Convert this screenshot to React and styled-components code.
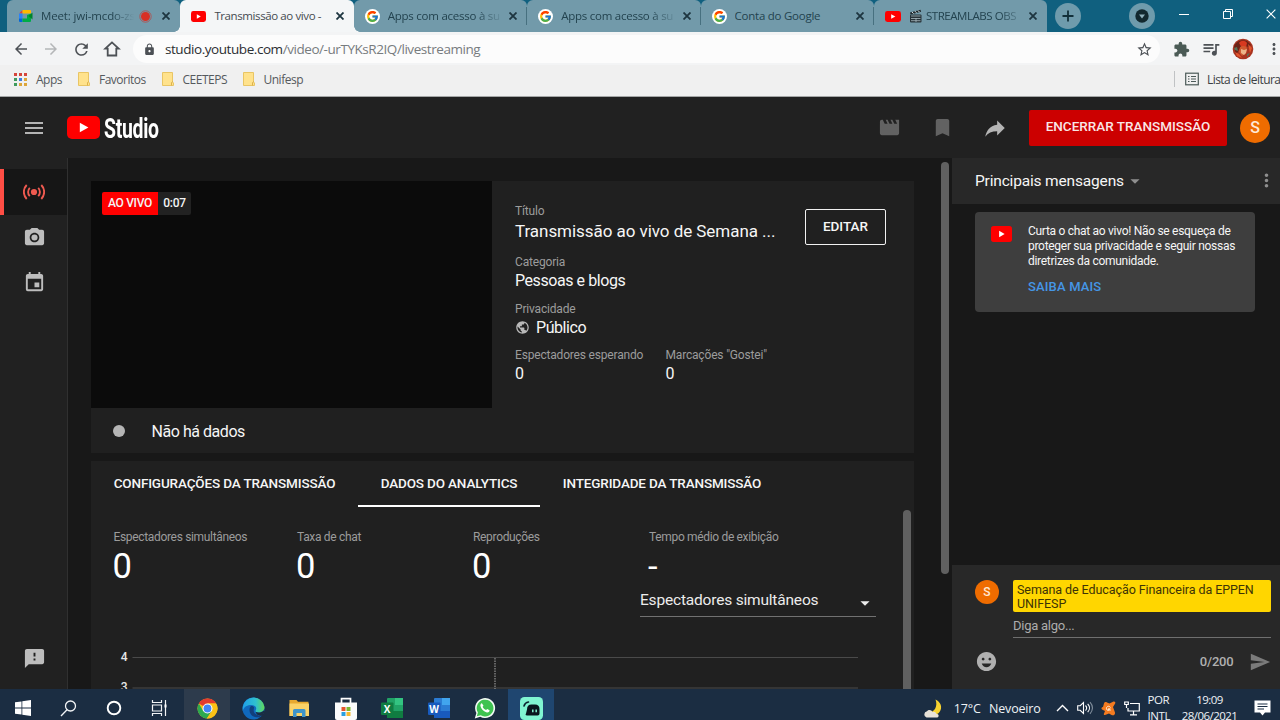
import React from 'react';
import styled, { createGlobalStyle, css } from 'styled-components';
import {
  MdArrowBack,
  MdArrowForward,
  MdRefresh,
  MdLock,
  MdStarBorder,
  MdExtension,
  MdQueueMusic,
  MdMoreVert,
  MdMenu,
  MdMovie,
  MdBookmark,
  MdReply,
  MdCameraAlt,
  MdEvent,
  MdFeedback,
  MdPublic,
  MdArrowDropDown,
  MdSend,
  MdEmojiEmotions,
} from 'react-icons/md';
import { FcGoogle } from 'react-icons/fc';

const GlobalStyle = createGlobalStyle`
  * {
    box-sizing: border-box;
  }

  body {
    margin: 0;
    background: #181818;
    overflow: hidden;
  }

  svg {
    display: block;
    flex: none;
  }
`;

const roboto = css`
  font-family: Roboto, 'Liberation Sans', sans-serif;
`;
const segoe = css`
  font-family: 'Open Sans', 'Noto Sans', sans-serif;
`;

const Screen = styled.div`
  width: 1280px;
  height: 720px;
  display: flex;
  flex-direction: column;
  overflow: hidden;
  white-space: nowrap;
  ${roboto};
`;

/* Browser chrome */
const TabStrip = styled.div`
  height: 32px;
  flex: none;
  display: flex;
  padding-left: 7px;
  background: #10607f;
  ${segoe};
`;
const Tab = styled.div`
  position: relative;
  width: 173.4px;
  height: 32px;
  flex: none;
  display: flex;
  align-items: center;
  padding: 0 10px 0 11px;
  border-radius: 6px 6px 0 0;
  background: ${({ $active }) => ($active ? '#f4f6f7' : '#729aaa')};
  color: ${({ $active }) => ($active ? '#454b50' : '#23434f')};
  z-index: ${({ $active }) => ($active ? 1 : 0)};

  ${({ $active }) =>
    $active &&
    css`
      &:before,
      &:after {
        content: '';
        position: absolute;
        bottom: 0;
        width: 6px;
        height: 6px;
      }
      &:before {
        left: -6px;
        background: radial-gradient(circle at 0 0, #729aaa 5.5px, #f4f6f7 6px);
      }
      &:after {
        right: -6px;
        background: radial-gradient(circle at 100% 0, #729aaa 5.5px, #f4f6f7 6px);
      }
    `}
  ${({ $sep }) =>
    $sep &&
    css`
      &:after {
        content: '';
        position: absolute;
        right: 0;
        top: 7px;
        width: 1px;
        height: 18px;
        background: #47707f;
      }
    `}
`;
const TabTitle = styled.div`
  flex: 1;
  min-width: 0;
  overflow: hidden;
  margin-left: ${({ $gap }) => $gap}px;
  margin-right: 5px;
  font-size: 11.5px;
  letter-spacing: ${({ $ls }) => $ls || -0.25}px;
  line-height: 18px;
  mask-image: ${({ $fade }) => ($fade ? 'linear-gradient(90deg, #000 76%, transparent 100%)' : 'none')};
`;
const Recording = styled.div`
  margin-right: 10px;
`;
const TitleEmoji = styled.div`
  margin-left: 8px;
`;
const Round = styled.div`
  width: ${({ $size }) => $size}px;
  height: ${({ $size }) => $size}px;
  flex: none;
  display: flex;
  align-items: center;
  justify-content: center;
  border-radius: 50%;
  background: ${({ $bg }) => $bg};
  color: #ffe9d6;
  font-size: ${({ $font }) => $font || 12}px;
  font-weight: 500;
`;
const StripActions = styled.div`
  flex: 1;
  display: flex;
  align-items: center;
`;
const NewTab = styled(Round)`
  margin-left: 8px;
`;
const TabSearch = styled(Round)`
  margin-left: 48px;
`;
const WindowButtons = styled.div`
  display: flex;
  align-items: center;
  gap: 33.5px;
  margin: -5px 0 0 24px;
`;

const Toolbar = styled.div`
  height: 33px;
  flex: none;
  display: flex;
  align-items: center;
  padding: 1px 0 0 12px;
  background: #f3f4f5;
  color: #4d5156;
`;
const NavButtons = styled.div`
  width: 121px;
  flex: none;
  display: flex;
  gap: 12px;
`;
const Omnibox = styled.div`
  width: 1027px;
  height: 28px;
  flex: none;
  display: flex;
  align-items: center;
  padding: 0 7px 0 10px;
  border-radius: 14px;
  background: #fcfcfc;
`;
const Url = styled.div`
  flex: 1;
  margin-left: 9px;
  font-size: 13.5px;
  letter-spacing: -0.44px;
  color: #777b7e;
  ${segoe};

  b {
    font-weight: 400;
    color: #2b2e31;
  }
`;
const Extensions = styled.div`
  display: flex;
  flex: none;
  align-items: center;
  gap: 11px;
  margin-left: 13px;
`;
const Bookmarks = styled.div`
  height: 32px;
  flex: none;
  display: flex;
  align-items: center;
  padding: 0 0 3px 14px;
  background: #f0f0f0;
  border-bottom: 1px solid #a4a6a6;
  font-size: 12px;
  letter-spacing: -0.5px;
  color: #55595d;
  ${segoe};
`;
const Bookmark = styled.div`
  display: flex;
  align-items: center;
  gap: 9px;
  width: ${({ $w }) => $w}px;
`;
const ReadingList = styled.div`
  display: flex;
  align-items: center;
  height: 16px;
  margin-left: auto;
  padding-left: 10px;
  border-left: 1px solid #c0c2c4;
  gap: 8px;
  width: 106px;
  color: #3c4043;
  letter-spacing: -0.55px;
`;

/* Studio shell */
const Header = styled.header`
  height: 61px;
  flex: none;
  display: flex;
  align-items: center;
  padding: 0 10px 0 22px;
  background: #212121;
  color: #b4b4b4;
`;
const Logo = styled.div`
  display: flex;
  align-items: center;
  gap: 4px;
  margin-left: 21px;
`;
const LogoText = styled.div`
  font-size: 27px;
  font-weight: 700;
  letter-spacing: -0.4px;
  line-height: 28px;
  padding-top: 2px;
  color: #fff;
  transform: scaleX(0.72);
  transform-origin: 0 50%;
`;
const HeaderActions = styled.div`
  display: flex;
  align-items: center;
  gap: 30px;
  margin-left: auto;
`;
const ShareIcon = styled(MdReply)`
  margin: 0 -9px 0 -2px;
  transform: scaleX(-1);
`;
const EndButton = styled.div`
  width: 198px;
  height: 36px;
  margin-right: -17px;
  padding-bottom: 4px;
  display: flex;
  align-items: center;
  justify-content: center;
  border-radius: 2px;
  background: #cc0000;
  color: #f9e6e6;
  font-size: 13.5px;
  font-weight: 500;
`;
const Body = styled.div`
  flex: 1;
  min-height: 0;
  display: flex;
`;
const Sidebar = styled.nav`
  width: 68px;
  flex: none;
  display: flex;
  flex-direction: column;
  padding-top: 11px;
  background: #212121;
  border-right: 1px solid #303030;
  color: #bdbdbd;
`;
const NavItem = styled.div`
  height: 45.5px;
  display: flex;
  align-items: center;
  justify-content: center;
  padding-left: 1px;
  margin-top: ${({ $last }) => ($last ? 'auto' : '0')};
  margin-bottom: ${({ $last }) => ($last ? '8px' : '0')};
  ${({ $active }) =>
    $active &&
    css`
      padding: 0 3px 0 0;
      border-left: 4px solid #ff4e45;
      background: #161616;
    `}
`;
const Main = styled.main`
  width: 884px;
  flex: none;
  display: flex;
  background: #181818;
`;
const Cards = styled.div`
  width: 846px;
  display: flex;
  flex-direction: column;
  gap: 8px;
  padding: 23px 0 0 23px;
`;
const Thumb = styled.div`
  width: 8px;
  height: ${({ $h }) => $h};
  border-radius: 4px;
  background: #606060;
`;
const MainThumb = styled(Thumb)`
  margin: 4px 0 0 27px;
`;

/* Stream card */
const StreamCard = styled.section`
  height: 272px;
  flex: none;
  background: #202020;
`;
const StreamTop = styled.div`
  height: 227px;
  display: flex;
`;
const Preview = styled.div`
  width: 401px;
  flex: none;
  display: flex;
  align-items: flex-start;
  padding: 11px;
  background: #0b0b0b;
`;
const Badge = styled.div`
  width: ${({ $w }) => $w}px;
  height: 23px;
  line-height: 23px;
  text-align: center;
  background: ${({ $live }) => ($live ? '#ff0000' : '#222')};
  color: #f4f4f4;
  font-size: 12px;
  font-weight: 500;
  letter-spacing: -0.3px;
  border-radius: ${({ $live }) => ($live ? '2px 0 0 2px' : '0 2px 2px 0')};
`;
const Info = styled.div`
  display: grid;
  grid-template-columns: 150.5px 1fr;
  grid-template-rows: 51px 46.5px 46.5px 40px;
  width: 290px;
  padding: 22px 0 0 23px;
`;
const Field = styled.div`
  grid-column: ${({ $wide }) => ($wide ? '1 / 3' : 'auto')};
`;
const Label = styled.div`
  font-size: 12px;
  line-height: 16px;
  letter-spacing: ${({ $ls }) => $ls || -0.18}px;
  color: #9c9c9c;
`;
const Value = styled.div`
  display: flex;
  align-items: center;
  gap: 6px;
  font-size: ${({ $size }) => $size || 16}px;
  line-height: ${({ $lh }) => $lh || 21}px;
  letter-spacing: ${({ $ls }) => $ls || -0.43}px;
  color: #f6f6f6;
`;
const EditButton = styled.div`
  width: 81px;
  height: 36px;
  margin: 28px 0 0 23px;
  padding-bottom: 2px;
  display: flex;
  align-items: center;
  justify-content: center;
  border: 1px solid #f1f1f1;
  border-radius: 2px;
  color: #f6f6f6;
  font-size: 13.5px;
  font-weight: 500;
`;
const Status = styled.div`
  height: 45px;
  display: flex;
  align-items: center;
  gap: 26.5px;
  padding: 1px 0 0 22px;
  font-size: 16px;
  letter-spacing: -0.45px;
  color: #f6f6f6;
`;

/* Analytics card */
const AnalyticsCard = styled.section`
  flex: 1;
  min-height: 0;
  overflow: hidden;
  background: #202020;
`;
const StatTabs = styled.div`
  display: flex;
  height: 46px;
`;
const StatTab = styled.div`
  width: ${({ $w }) => $w}px;
  text-align: center;
  line-height: 45px;
  border-bottom: 2px solid ${({ $active }) => ($active ? '#fff' : 'transparent')};
  color: #f6f6f6;
  font-size: 13.5px;
  font-weight: 500;
  letter-spacing: -0.15px;
`;
const AnalyticsBody = styled.div`
  display: flex;
  height: 182px;
`;
const AnalyticsContent = styled.div`
  width: 812px;
  display: flex;
  flex-direction: column;
  padding: 22px 0 0 22.5px;
`;
const AnalyticsThumb = styled(Thumb)`
  margin-top: 3px;
  border-radius: 4px 4px 0 0;
`;
const Metrics = styled.div`
  display: grid;
  grid-template-columns: 183.5px 176px 176px 1fr;
`;
const Metric = styled.div`
  height: 56px;
`;
const MetricValue = styled.div`
  margin-left: -1px;
  font-size: 34.5px;
  line-height: 42px;
  color: #fff;
`;
const Select = styled.div`
  width: 236px;
  height: 32px;
  margin-left: 526.5px;
  padding-bottom: 1px;
  display: flex;
  align-items: center;
  justify-content: space-between;
  border-bottom: 1px solid #717171;
  font-size: 15.5px;
  letter-spacing: -0.19px;
  color: #ececec;

  svg {
    margin-top: 5px;
  }
`;
const ChartArea = styled.div`
  margin-top: 30px;
`;

/* Chat */
const Chat = styled.aside`
  flex: 1;
  min-width: 0;
  display: flex;
  flex-direction: column;
  background: #181818;
`;
const ChatHeader = styled.div`
  height: 46px;
  display: flex;
  align-items: center;
  padding: 0 3px 1px 23px;
  background: #282828;
  color: #f6f6f6;
  font-size: 15.5px;
  letter-spacing: -0.17px;

  svg {
    margin-top: 1px;
    color: #8f8f8f;
  }

  svg:last-child {
    margin: 0 0 0 auto;
  }
`;
const Notice = styled.div`
  width: 280px;
  height: 100px;
  margin: 8px 0 0 23px;
  padding: 12px 0 0 16px;
  display: flex;
  gap: 16px;
  border-radius: 4px;
  background: #3e3e3e;
  color: #f6f6f6;
  font-size: 12px;
  line-height: 15px;
  letter-spacing: -0.29px;
`;
const NoticeIcon = styled.div`
  padding-top: 2px;
`;
const NoticeLink = styled.div`
  margin-top: 9px;
  font-size: 13px;
  font-weight: 500;
  line-height: 18px;
  letter-spacing: 0.15px;
  color: #4596e6;
`;
const Composer = styled.div`
  height: 124px;
  margin-top: auto;
  padding: 15px 9.5px 0 23px;
  background: #282828;
`;
const ComposerTop = styled.div`
  display: flex;
  gap: 14px;
`;
const ComposerInput = styled.div`
  flex: 1;
  height: 58px;
  border-bottom: 1px solid #6f6f6f;
  font-size: 13px;
  letter-spacing: -0.25px;
  color: #adadad;
`;
const Author = styled.div`
  height: 32px;
  margin-bottom: 6px;
  padding: 3px 4px 0;
  border-radius: 2px;
  background: #ffd600;
  color: #3d3306;
  font-size: 12.5px;
  line-height: 14px;
  letter-spacing: -0.08px;
`;
const ComposerBottom = styled.div`
  display: flex;
  align-items: center;
  height: 47px;
  color: #b0b0b0;
`;
const Counter = styled.div`
  margin: 0 15px 0 auto;
  font-size: 13px;
  font-weight: 500;
  letter-spacing: -0.2px;
`;

/* Windows taskbar */
const Taskbar = styled.footer`
  height: 31px;
  flex: none;
  display: flex;
  background: #1b2d42;
  color: #eef2f6;
  font-size: 12.5px;
  ${segoe};
`;
const TaskButton = styled.div`
  width: ${({ $app }) => ($app ? 46.3 : 45.5)}px;
  height: 31px;
  flex: none;
  display: flex;
  align-items: center;
  justify-content: center;
  padding-top: 7px;
  background: ${({ $bg }) => $bg || 'transparent'};
`;
const Apps = styled.div`
  display: flex;
  margin-left: 2px;
`;
const Tray = styled.div`
  display: flex;
  align-items: center;
  height: 38px;
  margin-left: auto;
  padding-right: 9.5px;
`;
const Weather = styled.div`
  display: flex;
  align-items: center;
  gap: 8.5px;
  margin-right: 15px;
  letter-spacing: -0.2px;
`;
const TrayIcons = styled.div`
  display: flex;
  align-items: center;
  gap: 8px;
  margin-right: 8px;
`;
const TrayText = styled.div`
  width: ${({ $w }) => $w}px;
  display: flex;
  flex-direction: column;
  align-items: ${({ $center }) => ($center ? 'center' : 'flex-start')};
  margin: -1px ${({ $center }) => ($center ? 6 : 0)}px 0 0;
  font-size: 11.5px;
  line-height: 16px;
  letter-spacing: ${({ $center }) => ($center ? -0.55 : -0.4)}px;
`;

const PlayLogo = ({ width = 33, height = 23, r = 5 }) => (
  <svg width={width} height={height} viewBox="0 0 33 23" preserveAspectRatio="none">
    <rect width="33" height="23" rx={r} fill="#ff0000" />
    <path d="M12.8 6.8 21.4 11.5 12.8 16.2z" fill="#fff" />
  </svg>
);

const Cross = ({ size = 8, color = '#1d3540', weight = 1.8 }) => (
  <svg width={size} height={size} viewBox="0 0 8 8">
    <path d="M.5.5 7.5 7.5M7.5.5.5 7.5" stroke={color} strokeWidth={weight} />
  </svg>
);

const MeetLogo = () => (
  <svg width="16" height="14" viewBox="0 0 16 14">
    <path d="M1 4.500 4.500 1v3.500z" fill="#e94235" />
    <path d="M4.500 1H12a1 1 0 0 1 1 1v2.500H4.500z" fill="#ffba00" />
    <path d="M1 4.500h3.500v5H1z" fill="#2684fc" />
    <path d="M1 9.500h3.500V13H2a1 1 0 0 1-1-1z" fill="#0066da" />
    <path d="M4.500 9.500H9V6l4-1.500V12a1 1 0 0 1-1 1H4.500z" fill="#00ac47" />
    <path d="M10.500 7 14.500 3.500v7z" fill="#00832d" />
  </svg>
);

const Clapper = () => (
  <svg width="13" height="14" viewBox="0 0 13 14">
    <path d="M1 3.500 11.500.8l.6 2L1.500 5.500z" fill="#1e282c" />
    <path d="m3 3 1.500 1.600M6 2.200l1.500 1.600M9 1.500l1.500 1.600" stroke="#dfe6e8" />
    <rect x="1" y="5.500" width="11.500" height="8" rx="1" fill="#263238" />
    <path d="M2 7h9.500M2 9.500h9.500M2 11.700h9.500M7 9v4" stroke="#a9bac0" strokeWidth=".8" />
  </svg>
);

const HomeIcon = () => (
  <svg width="18" height="18" viewBox="0 0 18 18">
    <path d="M9 2.400 2.300 8.700h2.400v6.800h8.600V8.700h2.400z" fill="none" stroke="#4d5156" strokeWidth="1.800" />
  </svg>
);

const ProfilePicture = () => (
  <svg width="22" height="22" viewBox="0 0 22 22">
    <circle cx="11" cy="11" r="10.300" fill="#a93420" />
    <path d="M2 8c3-5 7-7 13-5l4 4-3 2-4-3-4 4-4 7z" fill="#6b2216" />
    <path d="M7 5c2-3 6-3 8 0l-1 4-4 1z" fill="#d8391f" />
    <path d="M8 9c3-2 6-1 7 1l-1 5-4 3-3-4z" fill="#cf5a30" />
    <path d="M9 11l3 1 3-1-1 4-2 2-3-2z" fill="#ecb489" />
    <path d="M3 14l4 2 3 4-5-2zM16 6l4 4-2 5z" fill="#e3542c" />
    <path d="M2 10l3-1 1 4-3-1zM15 16l3-1-3 4z" fill="#57745a" />
  </svg>
);

const gridColors = ['#d5453b', '#d5453b', '#d5453b', '#3f9a5c', '#3f7de0', '#dda63a', '#3f9a5c', '#dda63a', '#dda63a'];

const AppsGrid = () => (
  <svg width="13" height="13" viewBox="0 0 13 13">
    {gridColors.map((c, i) => (
      <rect key={i} x={(i % 3) * 5} y={Math.floor(i / 3) * 5} width="3" height="3" fill={c} />
    ))}
  </svg>
);

const Folder = () => (
  <svg width="12" height="14" viewBox="0 0 12 14">
    <path d="M.5.500h10v9.500l1 1v2.500H.5z" fill="#ffe28c" stroke="#e9c564" />
    <path d="M9.500 13.500v-3l1.500-1" fill="none" stroke="#dcb24c" />
  </svg>
);

const LiveIcon = () => (
  <svg width="22" height="16" viewBox="0 0 22 16" fill="none" stroke="#ee5a50" strokeWidth="1.900">
    <circle cx="11" cy="8" r="3.100" fill="#ee5a50" stroke="none" />
    <path d="M6.800 3.800a6 6 0 0 0 0 8.400M15.200 3.800a6 6 0 0 1 0 8.400M3.700 1a10 10 0 0 0 0 14M18.300 1a10 10 0 0 1 0 14" />
  </svg>
);

const Chart = () => (
  <svg width="760" height="42" viewBox="0 0 760 42">
    <path d="M18.500 10.500H744M18.500 41H744" stroke="#4a4a4a" />
    <path d="M381 11V42" stroke="#a8a8a8" strokeDasharray="1.500 1" />
    <g fill="#e6e6e6" fontSize="12" fontWeight="500" fontFamily="Roboto, sans-serif" textAnchor="end">
      <text x="13.500" y="14">4</text>
      <text x="13.500" y="44">3</text>
    </g>
  </svg>
);

const WindowsIcon = () => (
  <svg width="16" height="16" viewBox="0 0 16 16" fill="#fff">
    <path d="M0 2.300 6.500 1.400v6.200H0zM7.300 1.300 16 0v7.600H7.300zM0 8.400h6.500v6.200L0 13.700zM7.300 8.400H16V16l-8.700-1.300z" />
  </svg>
);
const SearchIcon = () => (
  <svg width="17" height="17" viewBox="0 0 17 17" fill="none" stroke="#f2f4f6" strokeWidth="1.300">
    <circle cx="10.500" cy="6" r="5" />
    <path d="M7 9.700 1 16" />
  </svg>
);
const CortanaIcon = () => (
  <svg width="16" height="16" viewBox="0 0 16 16">
    <circle cx="8" cy="8" r="6.300" fill="none" stroke="#fff" strokeWidth="1.900" />
  </svg>
);
const TaskViewIcon = () => (
  <svg width="17" height="16" viewBox="0 0 17 16" fill="none" stroke="#f2f4f6" strokeWidth="1.200">
    <path d="M1.500 0v2.500h9V0M1.500 16v-2.500h9V16M1.500 5h9v6h-9zM14.500 0v16" />
    <rect x="13.500" y="4.500" width="2" height="3" fill="#fff" stroke="none" />
  </svg>
);
const ChromeIcon = () => (
  <svg width="21" height="21" viewBox="0 0 22 22">
    <circle cx="11" cy="11" r="10.500" fill="#fbc116" />
    <path d="M11 11 1.900 5.800A10.500 10.500 0 0 1 20.100 5.800H11z" fill="#e33b2e" />
    <path d="M1.900 5.800A10.500 10.500 0 0 0 10.300 21.500L15.500 13.600 6.500 13.600z" fill="#2da94f" />
    <path d="M11 5.800h9.100A10.500 10.500 0 0 1 10.300 21.500L15.500 13.600z" fill="#fbc116" />
    <circle cx="11" cy="11" r="5.200" fill="#fff" />
    <circle cx="11" cy="11" r="4.100" fill="#4285f4" />
  </svg>
);
const EdgeIcon = () => (
  <svg width="23" height="23" viewBox="0 0 23 23">
    <defs>
      <linearGradient id="edgeTop" x1="0" x2="1">
        <stop offset="0" stopColor="#1f9fe8" />
        <stop offset=".6" stopColor="#2fc0cf" />
        <stop offset="1" stopColor="#62d957" />
      </linearGradient>
    </defs>
    <circle cx="11.500" cy="11.500" r="11" fill="#1069bd" />
    <path
      d="M.7 10A11 11 0 0 1 22.500 10c0 4-3 5.500-6 5.500-2.500 0-3.500-.9-3-1.800 2-3-.5-5.700-4-5.700C5.500 8 2 9.500.7 14z"
      fill="url(#edgeTop)"
    />
    <path
      d="M9 9c-3 3-1.500 9.500 4 11 3 .8 5.500 0 7.500-2-3 1-8 .5-8.800-4-.2-1.800.5-2.800.3-3.800C11.700 9.300 10 8.600 9 9z"
      fill="#123f7c"
    />
    <path d="M13.600 13.600c-.6 1.500.9 1.900 2.900 1.900 2.200 0 4-.7 5-2.100l1 1.600-2 3.500c-3 1-7-.5-6.900-4.900z" fill="#1b2d42" />
  </svg>
);
const ExplorerIcon = () => (
  <svg width="21" height="18" viewBox="0 0 21 18">
    <path d="M.5 1h7l1.500 1.800h10.500V17H.5z" fill="#e8a92f" />
    <path d="M.5 4.500h19.500V17H.5z" fill="#fbd267" />
    <path d="M4 18v-6.500A1.500 1.500 0 0 1 5.500 10h9.500a1.500 1.500 0 0 1 1.500 1.500V18h-3.500v-4H7.500v4z" fill="#3f94c9" />
  </svg>
);
const StoreIcon = () => (
  <svg width="22" height="23" viewBox="0 0 22 23">
    <path d="M6.500 6V1.700h9V6" fill="none" stroke="#fff" strokeWidth="1.700" />
    <path d="M0 5.500h22V21a2 2 0 0 1-2 2H2a2 2 0 0 1-2-2z" fill="#fbfbfb" />
    <path d="M6.500 10h4v4h-4z" fill="#e5552c" />
    <path d="M11.500 10h4v4h-4z" fill="#7cb82f" />
    <path d="M6.500 15h4v4h-4z" fill="#2a9fe0" />
    <path d="M11.500 15h4v4h-4z" fill="#f5b82e" />
  </svg>
);

const OfficeIcon = ({ letter, light, mid, dark }) => (
  <svg width="22" height="20" viewBox="0 0 22 20">
    <rect x="6" width="16" height="20" rx="1" fill={mid} />
    <rect x="14" width="8" height="7" fill={light} />
    <rect x="6" y="13" width="16" height="7" fill={dark} />
    <rect y="4.500" width="12.500" height="12.500" rx="1" fill={dark} />
    <text x="6.200" y="14.500" textAnchor="middle" fill="#fff" fontSize="10" fontWeight="700" fontFamily="Open Sans, sans-serif">
      {letter}
    </text>
  </svg>
);
const WhatsappIcon = () => (
  <svg width="22" height="22" viewBox="0 0 22 22">
    <path d="M.8 21.500 2.400 16A10 10 0 1 1 6.200 19.800z" fill="#f4fbf5" />
    <path d="M2.800 19.300 3.900 15.500a8.400 8.400 0 1 1 2.800 2.800z" fill="#3fc351" />
    <path
      d="M7.900 6.200c-1 .2-1.700 1.300-1.500 2.600.5 3 3.500 6 6.500 6.600 1.300.2 2.700-.6 2.700-2.200l-2.400-1.300-1.100 1.200c-1.500-.5-3-1.900-3.500-3.300l.9-1.100z"
      fill="#fff"
    />
  </svg>
);
const StreamlabsIcon = () => (
  <svg width="23" height="23" viewBox="0 0 23 23">
    <rect width="23" height="23" rx="4.500" fill="#80f5d2" />
    <path d="M4 9A5.500 5.500 0 0 1 8.500 5" fill="none" stroke="#0c2530" strokeWidth="1.600" strokeLinecap="round" />
    <path
      d="M7 12.500c0-3.500 1.500-5 4.500-5h3.500c3 0 4.500 1.500 4.500 4.500v4.500c0 1.300-.7 2-2 2H7c-1.300 0-1.800-1-1-2z"
      fill="#09161e"
    />
    <path d="M12.800 12.500v2.800M16.200 12.500v2.800" stroke="#80f5d2" strokeWidth="1.500" />
  </svg>
);

const MoonIcon = () => (
  <svg width="21" height="19" viewBox="0 0 21 19">
    <path d="M11.500.5c5 2 7.500 8 4 12.500-2.500 3.500-8 3.500-10.500.5 5.500-.5 9-6 6.500-13z" fill="#f8d330" />
    <path d="M2.500 18.500a3.200 3.200 0 0 1 .5-6.200c1.500-2.300 4.700-1.600 5.500.7 1.600-.9 3.500.1 3.700 1.700 2.700-.2 3.300 3 1 3.800z" fill="#e8e2d8" />
  </svg>
);
const ChevronIcon = () => (
  <svg width="13" height="8" viewBox="0 0 13 8">
    <path d="M1 7 6.500 1.500 12 7" fill="none" stroke="#fff" strokeWidth="1.400" />
  </svg>
);
const SpeakerIcon = () => (
  <svg width="16" height="14" viewBox="0 0 16 14" fill="none" stroke="#fff" strokeWidth="1.100">
    <path d="M.7 4.700h2.500L6.500 1.500v11L3.200 9.300H.7zM8.500 4.500c1.400 1.500 1.400 3.500 0 5M10.700 2.800c2.300 2.500 2.300 6 0 8.400" />
    <path d="M13 1.200c3 3.500 3 8 0 11.600" stroke="#7e8b99" />
  </svg>
);
const AvastIcon = () => (
  <svg width="15" height="15" viewBox="0 0 15 15">
    <path
      d="M8.500 2.500 12.500.5c1.800-.3 2.300 1.200 1.500 2.300L12 6l2 5.500c.3 2.300-1.500 3.500-3.500 2.500L8 12.500 4 14c-1 .2-1.500-.5-1-1.500L4 10 1 8.500C0 7.500.5 6.200 2 6l1-3.500C3.500 1 5 .8 6 1.500z"
      fill="#f47b20"
    />
    <path d="M9.300 9.600 8 7.200l-1 2.400M9.500 6.500c-1.500-2.500-4.700-.8-4 1.500.5 1.800 3 1.700 4 0" fill="none" stroke="#ffe9d4" />
  </svg>
);
const NetworkIcon = () => (
  <svg width="16" height="15" viewBox="0 0 16 15" fill="none" stroke="#fff" strokeWidth="1.200">
    <path d="M6 2.500h9.300v7.500H4V7M9.500 10v3.500M6 13.800h7" />
    <path d="M.7 1v2.500h3.600V1zM2.500 4v3" />
  </svg>
);
const NotificationIcon = () => (
  <svg width="17" height="16" viewBox="0 0 17 16">
    <path d="M.5.500h16v12H11L8.500 15.500 6 12.500H.5z" fill="#fff" />
    <path d="M3.500 4h10M3.500 6.500h10M3.500 9h6.500" stroke="#1b2d42" />
  </svg>
);

const tabs = [
  { icon: <MeetLogo />, title: 'Meet: jwi-mcdo-zs', recording: true, fade: true, gap: 7, ls: -0.15 },
  { icon: <PlayLogo width={15} height={11} />, title: 'Transmissão ao vivo -', active: true, gap: 8, ls: -0.4 },
  { google: true, title: 'Apps com acesso à su', fade: true, gap: 8, sep: true },
  { google: true, title: 'Apps com acesso à su', fade: true, gap: 8, sep: true },
  { google: true, title: 'Conta do Google', gap: 8, sep: true },
  { icon: <PlayLogo width={16} height={11} />, title: 'STREAMLABS OBS', clapper: true, fade: true, gap: 4, ls: -0.45 },
];

const metrics = [
  ['Espectadores simultâneos', '0'],
  ['Taxa de chat', '0'],
  ['Reproduções', '0'],
  ['Tempo médio de exibição', '-'],
];

const Browser = () => (
  <>
    <TabStrip>
      {tabs.map((tab, i) => (
        <Tab key={i} $active={tab.active} $sep={tab.sep}>
          {tab.google ? (
            <Round $size={15} $bg="#fff">
              <FcGoogle size={13} />
            </Round>
          ) : (
            tab.icon
          )}
          {tab.clapper && (
            <TitleEmoji>
              <Clapper />
            </TitleEmoji>
          )}
          <TabTitle $gap={tab.gap} $fade={tab.fade} $ls={tab.ls}>
            {tab.title}
          </TabTitle>
          {tab.recording && (
            <Recording>
              <svg width="13" height="13" viewBox="0 0 13 13">
                <circle cx="6.500" cy="6.500" r="5.700" fill="none" stroke="#a75a5c" />
                <circle cx="6.500" cy="6.500" r="4.500" fill="#d93025" />
              </svg>
            </Recording>
          )}
          <Cross />
        </Tab>
      ))}
      <StripActions>
        <NewTab $size={26} $bg="#6f9bac">
          <svg width="12" height="12" viewBox="0 0 12 12">
            <path d="M6 .5v11M.5 6h11" stroke="#12303a" strokeWidth="1.800" />
          </svg>
        </NewTab>
        <TabSearch $size={26} $bg="#6f9bac">
          <svg width="14" height="14" viewBox="0 0 14 14">
            <circle cx="7" cy="7" r="6.700" fill="#12282f" />
            <path d="M4 5.500h6L7 9.500z" fill="#8fb0bc" />
          </svg>
        </TabSearch>
        <WindowButtons>
          <svg width="10" height="10" viewBox="0 0 10 10">
            <path d="M0 5.500h10" stroke="#fff" />
          </svg>
          <svg width="10" height="10" viewBox="0 0 10 10" fill="none" stroke="#fff">
            <path d="M.5 2.500h7v7h-7zM2.500 2.500v-2h7v7h-2" />
          </svg>
          <Cross size={10} color="#fff" weight={0.9} />
        </WindowButtons>
      </StripActions>
    </TabStrip>
    <Toolbar>
      <NavButtons>
        <MdArrowBack size={18} />
        <MdArrowForward size={18} color="#b4b6b8" />
        <MdRefresh size={19} />
        <HomeIcon />
      </NavButtons>
      <Omnibox>
        <MdLock size={13} />
        <Url>
          <b>studio.youtube.com</b>/video/-urTYKsR2IQ/livestreaming
        </Url>
        <MdStarBorder size={17} />
      </Omnibox>
      <Extensions>
        <MdExtension size={17} color="#4a5a55" />
        <MdQueueMusic size={20} />
        <ProfilePicture />
        <MdMoreVert size={18} />
      </Extensions>
    </Toolbar>
    <Bookmarks>
      <Bookmark $w={64}>
        <AppsGrid />
        Apps
      </Bookmark>
      <Bookmark $w={83.5}>
        <Folder />
        Favoritos
      </Bookmark>
      <Bookmark $w={81}>
        <Folder />
        CEETEPS
      </Bookmark>
      <Bookmark $w={80}>
        <Folder />
        Unifesp
      </Bookmark>
      <ReadingList>
        <svg width="14" height="14" viewBox="0 0 14 14" fill="none" stroke="#4c5a58" strokeWidth="1.200">
          <rect x=".7" y="1.200" width="12.600" height="11.600" />
          <path d="M3 4.500h1.500M3 7h1.500M3 9.500h1.500M6 4.500h5M6 7h5M6 9.500h5" />
        </svg>
        Lista de leitura
      </ReadingList>
    </Bookmarks>
  </>
);

const LiveStream = () => (
  <StreamCard>
    <StreamTop>
      <Preview>
        <Badge $live $w={56}>
          AO VIVO
        </Badge>
        <Badge $w={33}>0:07</Badge>
      </Preview>
      <Info>
        <Field $wide>
          <Label>Título</Label>
          <Value $size={17} $lh={25} $ls={-0.05}>
            Transmissão ao vivo de Semana ...
          </Value>
        </Field>
        <Field $wide>
          <Label>Categoria</Label>
          <Value>Pessoas e blogs</Value>
        </Field>
        <Field $wide>
          <Label>Privacidade</Label>
          <Value>
            <MdPublic size={15} color="#b8b8b8" />
            Público
          </Value>
        </Field>
        <Field>
          <Label>Espectadores esperando</Label>
          <Value>0</Value>
        </Field>
        <Field>
          <Label>Marcações "Gostei"</Label>
          <Value>0</Value>
        </Field>
      </Info>
      <EditButton>EDITAR</EditButton>
    </StreamTop>
    <Status>
      <Round $size={12} $bg="#b5b5b5" />
      Não há dados
    </Status>
  </StreamCard>
);

const Analytics = () => (
  <AnalyticsCard>
    <StatTabs>
      <StatTab $w={267}>CONFIGURAÇÕES DA TRANSMISSÃO</StatTab>
      <StatTab $w={182} $active>
        DADOS DO ANALYTICS
      </StatTab>
      <StatTab $w={244}>INTEGRIDADE DA TRANSMISSÃO</StatTab>
    </StatTabs>
    <AnalyticsBody>
      <AnalyticsContent>
        <Metrics>
          {metrics.map(([label, value]) => (
            <Metric key={label}>
              <Label $ls={-0.33}>{label}</Label>
              <MetricValue>{value}</MetricValue>
            </Metric>
          ))}
        </Metrics>
        <Select>
          Espectadores simultâneos
          <MdArrowDropDown size={22} />
        </Select>
        <ChartArea>
          <Chart />
        </ChartArea>
      </AnalyticsContent>
      <AnalyticsThumb $h="179px" />
    </AnalyticsBody>
  </AnalyticsCard>
);

const LiveChat = () => (
  <Chat>
    <ChatHeader>
      Principais mensagens
      <MdArrowDropDown size={22} />
      <MdMoreVert size={21} />
    </ChatHeader>
    <Notice>
      <NoticeIcon>
        <PlayLogo width={21} height={16} r={4} />
      </NoticeIcon>
      <div>
        Curta o chat ao vivo! Não se esqueça de
        <br />
        proteger sua privacidade e seguir nossas
        <br />
        diretrizes da comunidade.
        <NoticeLink>SAIBA MAIS</NoticeLink>
      </div>
    </Notice>
    <Composer>
      <ComposerTop>
        <Round $size={24} $bg="#ef6c00">
          S
        </Round>
        <ComposerInput>
          <Author>
            Semana de Educação Financeira da EPPEN
            <br />
            UNIFESP
          </Author>
          Diga algo...
        </ComposerInput>
      </ComposerTop>
      <ComposerBottom>
        <MdEmojiEmotions size={23} />
        <Counter>0/200</Counter>
        <MdSend size={22} color="#7b7b7b" />
      </ComposerBottom>
    </Composer>
  </Chat>
);

const App = () => (
  <Screen>
    <GlobalStyle />
    <Browser />
    <Header>
      <MdMenu size={24} />
      <Logo>
        <PlayLogo />
        <LogoText>Studio</LogoText>
      </Logo>
      <HeaderActions>
        <MdMovie size={23} color="#626262" />
        <MdBookmark size={23} color="#626262" />
        <ShareIcon size={26} />
        <EndButton>ENCERRAR TRANSMISSÃO</EndButton>
        <Round $size={30} $bg="#ef6c00" $font={16}>
          S
        </Round>
      </HeaderActions>
    </Header>
    <Body>
      <Sidebar>
        <NavItem $active>
          <LiveIcon />
        </NavItem>
        <NavItem>
          <MdCameraAlt size={23} />
        </NavItem>
        <NavItem>
          <MdEvent size={23} />
        </NavItem>
        <NavItem $last>
          <MdFeedback size={23} />
        </NavItem>
      </Sidebar>
      <Main>
        <Cards>
          <LiveStream />
          <Analytics />
        </Cards>
        <MainThumb $h="412px" />
      </Main>
      <LiveChat />
    </Body>
    <Taskbar>
      <TaskButton>
        <WindowsIcon />
      </TaskButton>
      <TaskButton>
        <SearchIcon />
      </TaskButton>
      <TaskButton>
        <CortanaIcon />
      </TaskButton>
      <TaskButton>
        <TaskViewIcon />
      </TaskButton>
      <Apps>
        <TaskButton $app $bg="#2d3b4c">
          <ChromeIcon />
        </TaskButton>
        <TaskButton $app>
          <EdgeIcon />
        </TaskButton>
        <TaskButton $app>
          <ExplorerIcon />
        </TaskButton>
        <TaskButton $app>
          <StoreIcon />
        </TaskButton>
        <TaskButton $app>
          <OfficeIcon letter="X" light="#33c481" mid="#21a366" dark="#107c41" />
        </TaskButton>
        <TaskButton $app>
          <OfficeIcon letter="W" light="#41a5ee" mid="#2b7cd3" dark="#185abd" />
        </TaskButton>
        <TaskButton $app>
          <WhatsappIcon />
        </TaskButton>
        <TaskButton $app $bg="#1f4670">
          <StreamlabsIcon />
        </TaskButton>
      </Apps>
      <Tray>
        <Weather>
          <MoonIcon />
          <span>17°C</span>
          <span>Nevoeiro</span>
        </Weather>
        <TrayIcons>
          <ChevronIcon />
          <SpeakerIcon />
          <AvastIcon />
          <NetworkIcon />
        </TrayIcons>
        <TrayText $w={24}>
          <span>POR</span>
          <span>INTL</span>
        </TrayText>
        <TrayText $w={76} $center>
          <span>19:09</span>
          <span>28/06/2021</span>
        </TrayText>
        <NotificationIcon />
      </Tray>
    </Taskbar>
  </Screen>
);

export default App;
